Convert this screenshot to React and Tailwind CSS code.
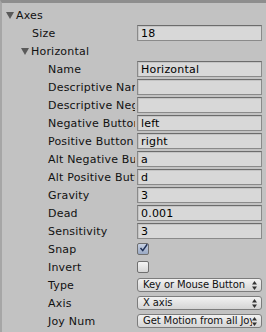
import React from "react";

const font = { fontFamily: '"DejaVu Sans", Verdana, sans-serif' };

function Tri() {
  return (
    <svg width="8" height="7" viewBox="0 0 8 7" className="shrink-0">
      <polygon points="0,0 8,0 4,7" fill="#5a5a5a" />
    </svg>
  );
}

function Label({ indent, children, foldout }) {
  return (
    <div
      className="flex items-center overflow-hidden whitespace-nowrap w-[133px] shrink-0 h-full"
      style={{ paddingLeft: indent }}
    >
      {foldout && <span className="mr-[2px] flex items-center"><Tri /></span>}
      <span className="text-[11px] text-[#111] leading-none tracking-[0.2px]">{children}</span>
    </div>
  );
}

function Field({ value }) {
  return (
    <div className="ml-[2px] w-[125px] h-[16px] bg-[#d8d8d8] border border-[#8a8a8a] border-t-[#6c6c6c] shadow-[inset_1px_1px_0_#c4c4c4] flex items-center pl-[3px] overflow-hidden whitespace-nowrap">
      <span className="text-[11px] text-black leading-none tracking-[0.2px]">{value}</span>
    </div>
  );
}

function Arrows() {
  return (
    <svg width="5" height="9" viewBox="0 0 5 9" className="shrink-0">
      <polygon points="2.5,0 5,3.5 0,3.5" fill="#333" />
      <polygon points="0,5.5 5,5.5 2.5,9" fill="#333" />
    </svg>
  );
}

function Popup({ value }) {
  return (
    <div className="ml-[2px] w-[125px] h-[14px] rounded-[3px] border border-[#7c7c7c] bg-gradient-to-b from-[#f2f2f2] to-[#d4d4d4] flex items-center pl-[5px] pr-[4px] overflow-hidden whitespace-nowrap">
      <span className="text-[10px] text-[#111] leading-none flex-1 overflow-hidden tracking-[-0.1px]">{value}</span>
      <Arrows />
    </div>
  );
}

function Check({ checked }) {
  return (
    <div className="ml-[2px] w-[12px] h-[12px] rounded-[2px] border border-[#6f6f6f] flex items-center justify-center"
      style={{ background: checked ? "linear-gradient(#c6d0e2,#9aa9c4)" : "linear-gradient(#f4f4f4,#d6d6d6)" }}>
      {checked && (
        <svg width="12" height="12" viewBox="0 0 12 12" className="-mt-[2px] ml-[1px]">
          <path d="M2 6 L5 9.5 L11 1" stroke="#1e2f55" strokeWidth="2" fill="none" />
        </svg>
      )}
    </div>
  );
}

function Row({ children }) {
  return <div className="h-[18px] flex items-center">{children}</div>;
}

export default function App() {
  const rows = [
    ["Name", <Field value="Horizontal" />],
    ["Descriptive Name", <Field value="" />],
    ["Descriptive Negative Name", <Field value="" />],
    ["Negative Button", <Field value="left" />],
    ["Positive Button", <Field value="right" />],
    ["Alt Negative Button", <Field value="a" />],
    ["Alt Positive Button", <Field value="d" />],
    ["Gravity", <Field value="3" />],
    ["Dead", <Field value="0.001" />],
    ["Sensitivity", <Field value="3" />],
    ["Snap", <Check checked />],
    ["Invert", <Check />],
    ["Type", <Popup value="Key or Mouse Button" />],
    ["Axis", <Popup value="X axis" />],
    ["Joy Num", <Popup value="Get Motion from all Joysticks" />],
  ];
  return (
    <div className="w-[266px] h-[332px] bg-[#c2c2c2] border-t-[3px] border-t-[#8e8e8e] border-l-[2px] border-l-[#a6a6a6] overflow-hidden" style={font}>
      <div className="pt-[3px]">
        <Row><Label indent={4} foldout>Axes</Label></Row>
        <Row><Label indent={30}>Size</Label><Field value="18" /></Row>
        <Row><Label indent={19} foldout>Horizontal</Label></Row>
        {rows.map(([l, c], i) => (
          <Row key={i}><Label indent={46}>{l}</Label>{c}</Row>
        ))}
      </div>
    </div>
  );
}
